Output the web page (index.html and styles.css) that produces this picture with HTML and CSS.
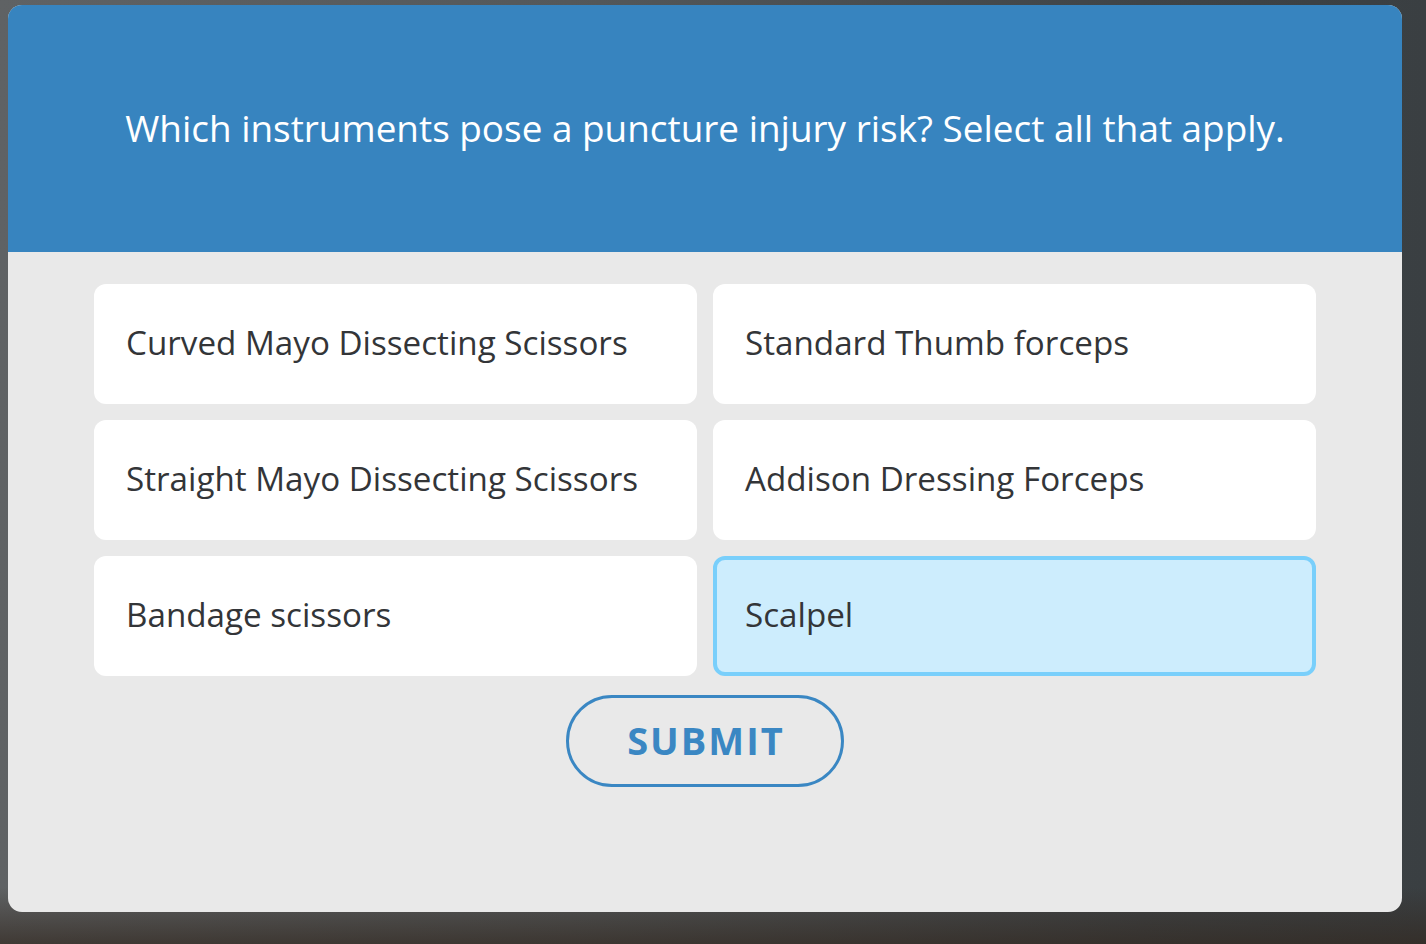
FILE: index.html
```html
<!DOCTYPE html>
<html>
<head>
<meta charset="utf-8">
<link rel="stylesheet" href="styles.css">
</head>
<body>
<div class="scene">
  <div class="modal">
    <div class="header">
      <h1 class="question">Which instruments pose a puncture injury risk? Select all that apply.</h1>
    </div>
    <div class="content">
      <div class="options">
        <div class="option">Curved Mayo Dissecting Scissors</div>
        <div class="option">Standard Thumb forceps</div>
        <div class="option">Straight Mayo Dissecting Scissors</div>
        <div class="option">Addison Dressing Forceps</div>
        <div class="option">Bandage scissors</div>
        <div class="option selected">Scalpel</div>
      </div>
      <button class="submit">SUBMIT</button>
    </div>
  </div>
</div>
</body>
</html>
```

FILE: styles.css
```css
html, body {
  margin: 0;
  padding: 0;
  height: 100%;
}
body {
  font-family: "Open Sans", "Noto Sans", sans-serif;
  background: #4a4e51;
  overflow: hidden;
}
.scene {
  width: 1426px;
  height: 944px;
  padding: 5px 0 0 8px;
  box-sizing: border-box;
  background:
    linear-gradient(180deg, rgba(0,0,0,0) 0%, rgba(0,0,0,0) 94%, rgba(50,40,32,0.7) 100%),
    linear-gradient(90deg, #5f6264 0%, #54585a 40%, #3f4447 80%, #3a3f42 100%);
}
.modal {
  width: 1394px;
  height: 907px;
  background: #e9e9e9;
  border-radius: 14px;
  overflow: hidden;
  display: flex;
  flex-direction: column;
}
.header {
  height: 247px;
  background: #3784bf;
  display: flex;
  align-items: center;
  justify-content: center;
  padding-bottom: 2px;
  box-sizing: border-box;
}
.question {
  margin: 0;
  color: #ffffff;
  font-weight: 400;
  font-size: 36.9px;
  letter-spacing: 0;
}
.content {
  display: flex;
  flex-direction: column;
  align-items: center;
  padding-top: 32px;
}
.options {
  display: grid;
  grid-template-columns: 603px 603px;
  grid-auto-rows: 120px;
  gap: 16px;
}
.option {
  background: #ffffff;
  border-radius: 12px;
  display: flex;
  align-items: center;
  padding-left: 32px;
  padding-bottom: 3px;
  box-sizing: border-box;
  font-size: 33.2px;
  color: #333538;
  letter-spacing: 0;
}
.option.selected {
  background: #cdedfd;
  border: 4px solid #79cffb;
  padding-left: 28px;
}
.submit {
  margin-top: 19px;
  width: 278px;
  height: 92px;
  border: 3px solid #3a87c3;
  border-radius: 46px;
  background: transparent;
  color: #3a87c3;
  font-family: "Open Sans", "Noto Sans", sans-serif;
  font-weight: 700;
  font-size: 38px;
  letter-spacing: 2px;
  padding: 0 0 2px 2px;
}
```
